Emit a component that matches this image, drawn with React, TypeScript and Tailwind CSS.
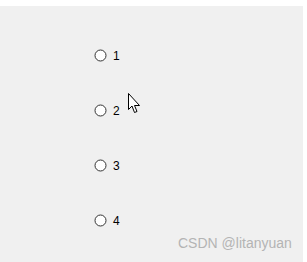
const items = ["1", "2", "3", "4"]

function Radio() {
  return (
    <svg width="13" height="13" viewBox="0 0 13 13" className="shrink-0">
      <circle cx="6.5" cy="6.5" r="5.5" fill="#ffffff" stroke="#333333" strokeWidth="1" />
    </svg>
  )
}

function Cursor() {
  return (
    <svg width="13" height="21" viewBox="0 0 13 21" className="absolute left-[128px] top-[87px]">
      <path
        d="M0.5 0.5 L0.5 16.5 L4 13 L6.5 19.5 L9 18.5 L6.5 12.5 L11.5 12.5 Z"
        fill="#ffffff"
        stroke="#000000"
        strokeWidth="1"
        strokeLinejoin="miter"
      />
    </svg>
  )
}

export default function App() {
  return (
    <div className="w-[307px] h-[262px] bg-white pt-[6px] pr-[4px]">
      <div className="relative h-full bg-[#f0f0f0]">
        <div className="flex flex-col gap-[42px] pl-[94px] pt-[43px]">
          {items.map((n) => (
            <div key={n} className="flex items-center gap-[6px] h-[13px]">
              <Radio />
              <span className="text-[12px] leading-none text-black font-['Liberation_Sans',sans-serif]">
                {n}
              </span>
            </div>
          ))}
        </div>
        <Cursor />
        <div className="absolute left-[178px] top-[230px] text-[14px] leading-none text-[#b4b4b4] font-['Liberation_Sans',Arial,sans-serif]">
          CSDN @litanyuan
        </div>
      </div>
    </div>
  )
}
